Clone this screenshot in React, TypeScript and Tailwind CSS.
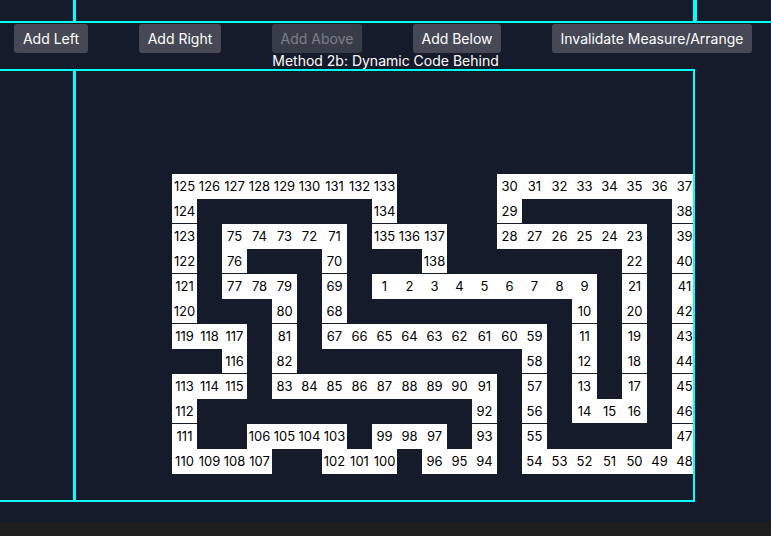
import React from "react";

const path: [number, number][] = [];
const seg = (r0: number, c0: number, r1: number, c1: number) => {
  const dr = Math.sign(r1 - r0);
  const dc = Math.sign(c1 - c0);
  let r = r0;
  let c = c0;
  while (r !== r1 || c !== c1) {
    r += dr;
    c += dc;
    path.push([r, c]);
  }
};
path.push([4, 8]);
seg(4, 8, 4, 16);
seg(4, 16, 9, 16);
seg(9, 16, 9, 18);
seg(9, 18, 2, 18);
seg(2, 18, 2, 13);
seg(2, 13, 0, 13);
seg(0, 13, 0, 20);
seg(0, 20, 11, 20);
seg(11, 20, 11, 14);
seg(11, 14, 6, 14);
seg(6, 14, 6, 6);
seg(6, 6, 2, 6);
seg(2, 6, 2, 2);
seg(2, 2, 4, 2);
seg(4, 2, 4, 4);
seg(4, 4, 8, 4);
seg(8, 4, 8, 12);
seg(8, 12, 11, 12);
seg(11, 12, 11, 10);
seg(11, 10, 10, 10);
seg(10, 10, 10, 8);
seg(10, 8, 11, 8);
seg(11, 8, 11, 6);
seg(11, 6, 10, 6);
seg(10, 6, 10, 3);
seg(10, 3, 11, 3);
seg(11, 3, 11, 0);
seg(11, 0, 8, 0);
seg(8, 0, 8, 2);
seg(8, 2, 6, 2);
seg(6, 2, 6, 0);
seg(6, 0, 0, 0);
seg(0, 0, 0, 8);
seg(0, 8, 2, 8);
seg(2, 8, 2, 10);
seg(2, 10, 3, 10);

const map = new Map<string, number>();
path.slice(0, 138).forEach(([r, c], i) => map.set(`${r}-${c}`, i + 1));

const ROWS = 12;
const COLS = 21;

function Cell({ r, c }: { r: number; c: number }) {
  const n = map.get(`${r}-${c}`);
  if (n === undefined) return <div className="w-[25px] h-[25px]" />;
  const lined = r % 2 === 1 && r < 11;
  return (
    <div
      className={
        lined
          ? "w-[25px] h-[25px] bg-white border-b border-[#161b2b] flex items-center justify-center text-[13px] text-black leading-none"
          : "w-[25px] h-[25px] bg-white flex items-center justify-center text-[13px] text-black leading-none"
      }
    >
      {n}
    </div>
  );
}

function Btn({ label, w, disabled }: { label: string; w: string; disabled?: boolean }) {
  return (
    <div
      className={
        (disabled
          ? "bg-[#383c48] text-[#7b7f8a] "
          : "bg-[#464955] text-white ") +
        w +
        " h-[29px] rounded-[3px] flex items-center justify-center text-[14px] leading-none"
      }
    >
      {label}
    </div>
  );
}

export default function App() {
  const all: React.ReactNode[] = [];
  for (let r = 0; r < ROWS; r++)
    for (let c = 0; c < COLS; c++) all.push(<Cell key={`${r}-${c}`} r={r} c={c} />);
  return (
    <div
      className="w-[771px] h-[536px] bg-[#161b2b] flex flex-col overflow-hidden"
      style={{ fontFamily: "Inter, 'Noto Sans', sans-serif" }}
    >
      <div className="h-[522px] flex flex-col">
        <div className="h-[21px] flex">
          <div className="w-[73px]" />
          <div className="w-[624px] h-full border-l-[3px] border-r-[4px] border-[#00ffff]" />
        </div>
        <div className="h-[2px] bg-[#00ffff]" />
        <div className="flex pl-[14px] pt-[1px] gap-[51px]">
          <Btn label="Add Left" w="w-[74px]" />
          <Btn label="Add Right" w="w-[82px]" />
          <Btn label="Add Above" w="w-[90px]" disabled />
          <Btn label="Add Below" w="w-[88px]" />
          <Btn label="Invalidate Measure/Arrange" w="w-[200px]" />
        </div>
        <div className="h-[16px] text-white text-[14px] leading-[16px] text-center">
          Method 2b: Dynamic Code Behind
        </div>
        <div className="w-[695px] h-[433px] border-t-2 border-b-2 border-r-2 border-[#00ffff] flex">
          <div className="w-[73px] border-r-[3px] border-[#00ffff] box-content" />
          <div className="w-[617px] overflow-hidden">
            <div className="ml-[96px] mt-[103px] grid grid-cols-[repeat(21,25px)] grid-rows-[repeat(12,25px)] w-[525px]">
              {all}
            </div>
          </div>
        </div>
      </div>
      <div className="h-[14px] bg-[#1e1e1e]" />
    </div>
  );
}
